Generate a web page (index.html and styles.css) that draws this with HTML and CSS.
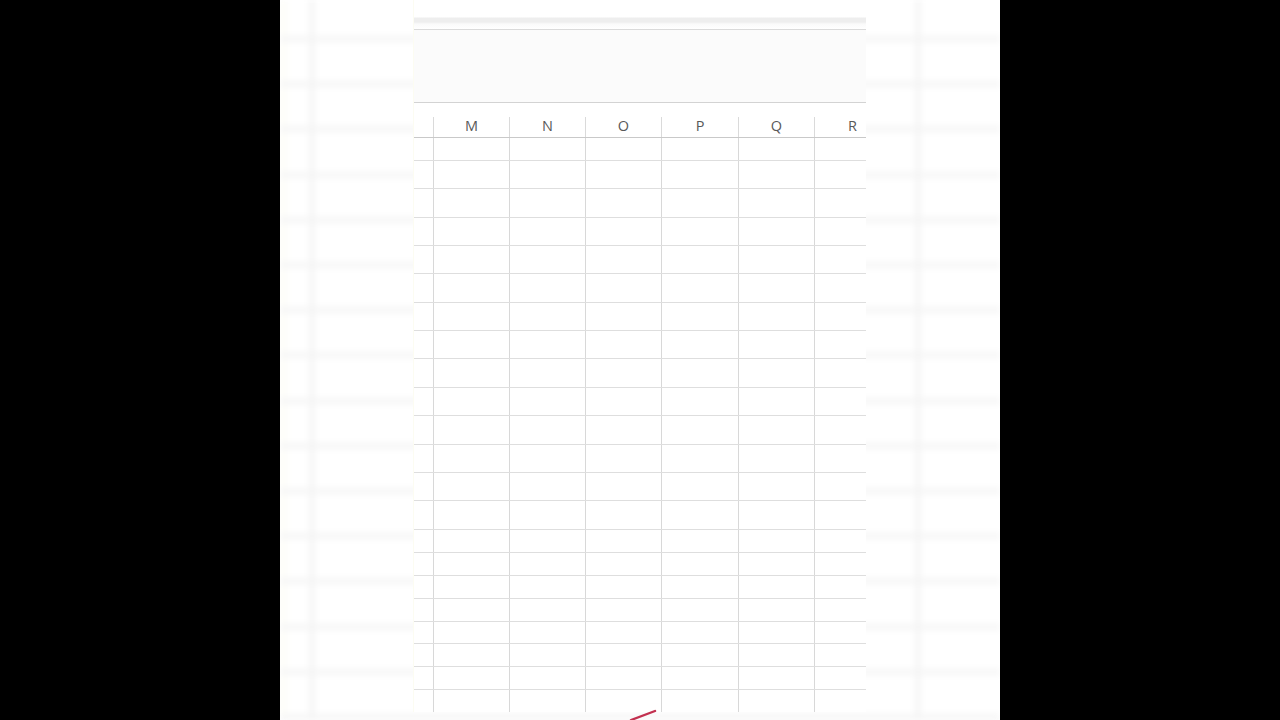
FILE: index.html
```html
<!DOCTYPE html>
<html lang="en">
<head>
<meta charset="utf-8">
<title>Sheet</title>
<link rel="stylesheet" href="styles.css">
</head>
<body>
<div class="stage">
  <div class="sheet">
    <div class="topbar"></div>
    <div class="panel"></div>
    <div class="colhead">
      <div class="corner"></div>
      <div class="col">M</div>
      <div class="col">N</div>
      <div class="col">O</div>
      <div class="col">P</div>
      <div class="col">Q</div>
      <div class="col">R</div>
    </div>
    <div class="rows">
      <div class="row h23"></div>
      <div class="row h28"></div>
      <div class="row h29"></div>
      <div class="row h28"></div>
      <div class="row h28"></div>
      <div class="row h29"></div>
      <div class="row h28"></div>
      <div class="row h28"></div>
      <div class="row h29"></div>
      <div class="row h28"></div>
      <div class="row h29"></div>
      <div class="row h28"></div>
      <div class="row h28"></div>
      <div class="row h29"></div>
      <div class="row h23"></div>
      <div class="row h23"></div>
      <div class="row h23"></div>
      <div class="row h23"></div>
      <div class="row h22"></div>
      <div class="row h23"></div>
      <div class="row h23"></div>
      <div class="row last"></div>
    </div>
  </div>
  <svg class="pen" width="30" height="12" viewBox="0 0 30 12"><path d="M2 11 L26 2" stroke="#c2304f" stroke-width="2.4" stroke-linecap="round" fill="none"/></svg>
</div>
</body>
</html>
```

FILE: styles.css
```css
html, body {
  margin: 0;
  padding: 0;
  background: #000;
}
.stage {
  position: relative;
  width: 720px;
  height: 720px;
  margin: 0 auto;
  padding-left: 133px;
  box-sizing: border-box;
  background: #fff;
  overflow: hidden;
  display: flex;
}
.stage::before {
  content: "";
  position: absolute;
  inset: 0;
  background-image:
    linear-gradient(to right, transparent 29px, #f5f5f5 29px, #f5f5f5 35px, transparent 35px),
    linear-gradient(to right, transparent 635px, #f5f5f5 635px, #f5f5f5 641px, transparent 641px),
    repeating-linear-gradient(to bottom, transparent 0, transparent 36px, #f6f6f6 36px, #f6f6f6 42px, transparent 42px, transparent 45.2px),
    linear-gradient(to right, #fdfdf5 0, #ffffff 10px);
  filter: blur(3px);
}
.sheet {
  position: relative;
  width: 453px;
  height: 712px;
  overflow: hidden;
  display: flex;
  flex-direction: column;
  background: #fff;
  border-left: 1px solid #fcfcf2;
  box-sizing: border-box;
}
.topbar {
  height: 30px;
  box-sizing: border-box;
  border-bottom: 1px solid #dadada;
  background: linear-gradient(to bottom, #ffffff 0, #ffffff 17px, #eeeeee 18px, #eeeeee 22px, #fafafa 24px, #ffffff 29px);
}
.panel {
  height: 73px;
  box-sizing: border-box;
  background: #fbfbfb;
  border-bottom: 1px solid #d3d3d3;
}
.colhead {
  height: 35px;
  box-sizing: border-box;
  display: grid;
  grid-template-columns: 19px 76px 76px 76px 77px 76px 76px;
  border-bottom: 1px solid #c9c9c9;
  font-family: "Open Sans", "Noto Sans", sans-serif;
  font-size: 14.5px;
  color: #595959;
}
.corner {
  background: #fff;
}
.col {
  border-left: 1px solid #dadada;
  margin-top: 14px;
  display: flex;
  align-items: center;
  justify-content: center;
  line-height: 1;
  padding-bottom: 2px;
}
.rows {
  flex: 1;
  display: flex;
  flex-direction: column;
  background-image:
    linear-gradient(to right, transparent 19px, #d8d8d8 19px, #d8d8d8 20px, transparent 20px),
    linear-gradient(to right, transparent 95px, #d8d8d8 95px, #d8d8d8 96px, transparent 96px),
    linear-gradient(to right, transparent 171px, #d8d8d8 171px, #d8d8d8 172px, transparent 172px),
    linear-gradient(to right, transparent 247px, #d8d8d8 247px, #d8d8d8 248px, transparent 248px),
    linear-gradient(to right, transparent 324px, #d8d8d8 324px, #d8d8d8 325px, transparent 325px),
    linear-gradient(to right, transparent 400px, #d8d8d8 400px, #d8d8d8 401px, transparent 401px);
}
.row {
  box-sizing: border-box;
  border-bottom: 1px solid #dedede;
  flex: none;
}
.h22 { height: 22px; }
.h23 { height: 23px; }
.h28 { height: 28px; }
.h29 { height: 29px; }
.row.last {
  flex: 1;
  border-bottom: 0;
}
.pen {
  position: absolute;
  left: 349px;
  top: 709px;
  filter: blur(0.6px);
}
```
